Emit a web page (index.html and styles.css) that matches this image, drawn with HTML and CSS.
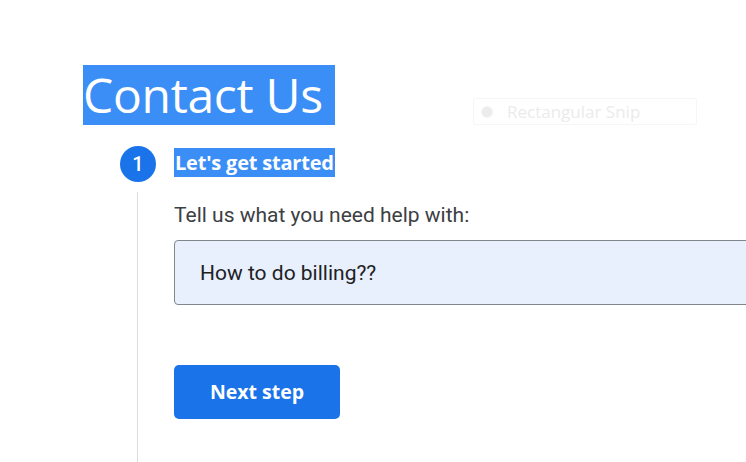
FILE: index.html
```html
<!DOCTYPE html>
<html lang="en">
<head>
<meta charset="utf-8">
<title>Contact Us</title>
<link rel="stylesheet" href="styles.css">
</head>
<body>
<div class="page">
  <h1 class="title"><span class="sel">Contact Us&nbsp;</span></h1>
  <div class="stepper">
    <div class="step-head">
      <div class="num">1</div>
      <span class="label sel">Let's get started</span>
    </div>
    <div class="step-body">
      <p class="prompt">Tell us what you need help with:</p>
      <div class="input">How to do billing??</div>
      <button class="next" type="button">Next step</button>
    </div>
  </div>
  <div class="snip">
    <span class="snip-icon"></span>
    <span class="snip-text">Rectangular Snip</span>
  </div>
</div>
</body>
</html>
```
FILE: styles.css
```css
html, body {
  margin: 0;
  padding: 0;
  background: #ffffff;
  overflow: hidden;
}
.page {
  position: relative;
  width: 746px;
  height: 462px;
  overflow: hidden;
  font-family: Roboto, "Liberation Sans", sans-serif;
}
.sel {
  background: #3a8ef6;
  color: #ffffff;
}
.title {
  margin: 0;
  padding: 65px 0 0 83px;
  font-family: "Open Sans", "Liberation Sans", sans-serif;
  font-weight: 400;
  font-size: 48px;
  line-height: 60px;
  letter-spacing: -0.3px;
}
.title .sel {
  display: inline-block;
}
.stepper {
  padding-top: 21px;
}
.step-head {
  display: flex;
  align-items: center;
  gap: 18px;
  padding-left: 120px;
  height: 36px;
}
.num {
  width: 36px;
  height: 36px;
  border-radius: 50%;
  background: #1a73e8;
  color: #ffffff;
  display: flex;
  align-items: center;
  justify-content: center;
  font-family: Roboto, sans-serif;
  font-size: 20px;
  font-weight: 500;
}
.label {
  font-family: "Open Sans", "Liberation Sans", sans-serif;
  font-weight: 700;
  font-size: 20px;
  line-height: 29px;
  padding: 0 1px;
  letter-spacing: -0.2px;
  margin-top: -3px;
}
.step-body {
  margin-left: 137px;
  margin-top: 10px;
  border-left: 1px solid #dadce0;
  padding-left: 36px;
  min-height: 300px;
  padding-top: 10px;
}
.prompt {
  margin: 0;
  font-size: 21px;
  line-height: 26px;
  color: #3c4043;
}
.input {
  margin-top: 12px;
  height: 65px;
  width: 620px;
  box-sizing: border-box;
  border: 1px solid #80868b;
  border-radius: 4px;
  background: #e8f0fe;
  padding-left: 25px;
  display: flex;
  align-items: center;
  font-size: 21px;
  color: #202124;
}
.next {
  margin-top: 60px;
  width: 166px;
  height: 54px;
  border: none;
  border-radius: 5px;
  background: #1a73e8;
  color: #ffffff;
  font-family: "Open Sans", "Liberation Sans", sans-serif;
  font-weight: 700;
  font-size: 19.5px;
  padding-bottom: 2px;
  cursor: pointer;
}
.snip {
  position: absolute;
  left: 473px;
  top: 98px;
  width: 224px;
  height: 27px;
  box-sizing: border-box;
  border: 1px solid #f6f6f6;
  border-radius: 2px;
  display: flex;
  align-items: center;
  gap: 14px;
  padding-left: 7px;
}
.snip-icon {
  width: 10px;
  height: 10px;
  border-radius: 50%;
  background: #ececec;
  border: 1px solid #f4f4f4;
}
.snip-text {
  font-family: "Open Sans", sans-serif;
  font-size: 17px;
  color: #ebebeb;
}
```
